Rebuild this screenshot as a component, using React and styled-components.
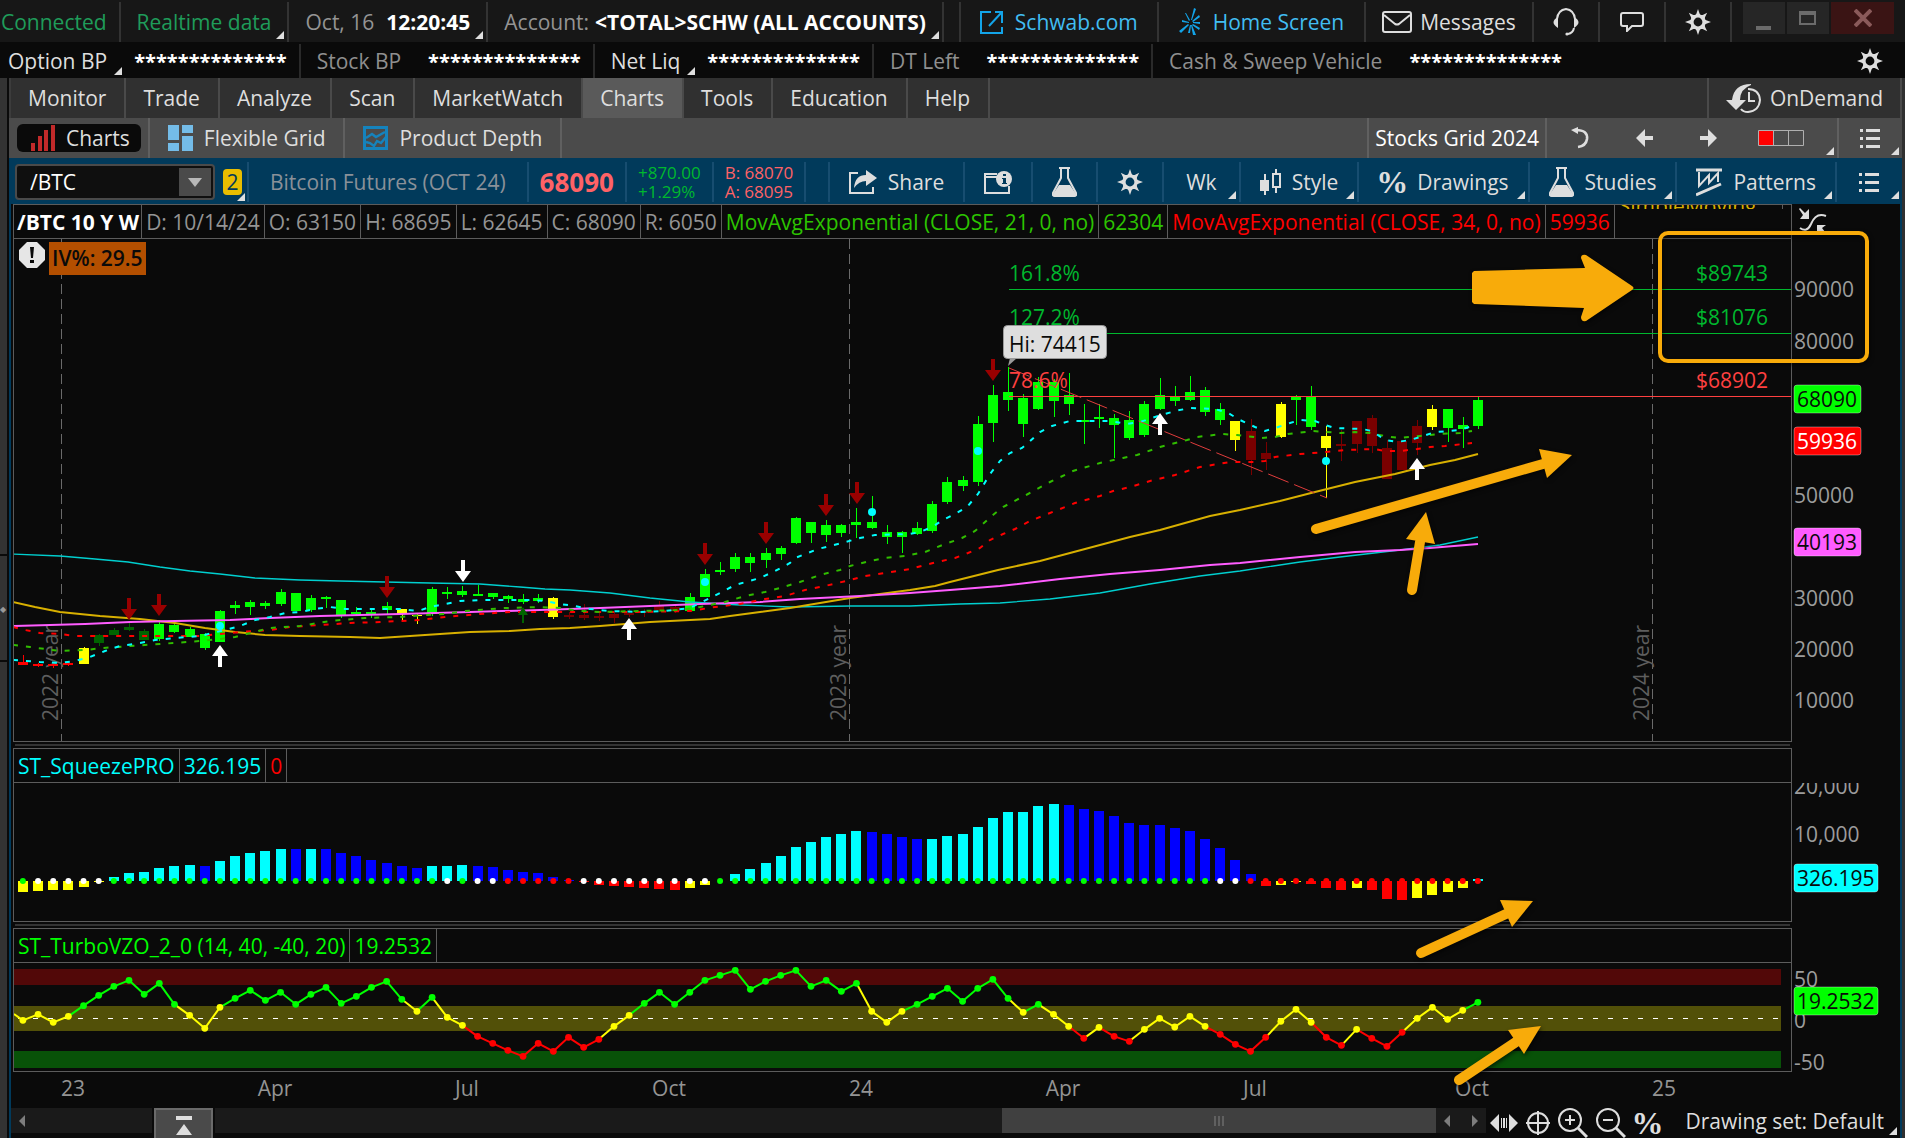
import React from 'react';
import styled, { createGlobalStyle, css } from 'styled-components';

/* ---------- data ---------- */

const STEP = 15.156;
const barX = (i) => 22.9 + STEP * i;

const GREEN = '#00ff00';
const DARK_GREEN = '#006400';
const RED = '#ff0000';
const MAROON = '#7a0000';
const YELLOW = '#ffff00';
const CYAN = '#00ffff';
const BLUE = '#0000ff';
const ORANGE = '#f8ab0a';

// high, low, body top, body bottom, colour
const candles = [
    [655, 665, 662, 665, RED], [663, 667, 664, 666, RED], [663, 668, 664, 666, RED], [662, 666, 663, 665, RED],
    [647, 664, 648, 664, YELLOW], [634, 646, 635, 643, DARK_GREEN], [628, 635, 630, 635, DARK_GREEN],
    [623, 631, 627, 630, DARK_GREEN], [629, 640, 631, 640, DARK_GREEN], [620, 641, 624, 639, GREEN],
    [621, 633, 625, 632, GREEN], [627, 637, 629, 637, GREEN], [633, 650, 634, 648, GREEN], [610, 642, 611, 642, GREEN],
    [601, 614, 605, 608, GREEN], [600, 615, 602, 607, GREEN], [601, 609, 603, 606, GREEN], [589, 606, 592, 604, GREEN],
    [593, 611, 593, 611, GREEN], [595, 612, 598, 610, GREEN], [596, 608, 597, 599, GREEN], [600, 618, 600, 615, GREEN],
    [607, 616, 612, 614, GREEN], [608, 618, 612, 614, GREEN], [602, 614, 606, 610, GREEN], [609, 620, 609, 614, YELLOW],
    [613, 624, 615, 616, YELLOW], [587, 616, 589, 614, GREEN], [587, 599, 592, 594, GREEN], [586, 597, 591, 595, GREEN],
    [585, 596, 594, 596, GREEN], [593, 599, 593, 597, GREEN], [595, 603, 596, 599, GREEN], [594, 604, 599, 602, GREEN],
    [594, 603, 598, 601, GREEN], [597, 619, 598, 617, YELLOW], [612, 619, 615, 617, MAROON], [604, 620, 615, 618, MAROON],
    [612, 621, 616, 618, MAROON], [612, 623, 614, 618, MAROON], [609, 617, 613, 615, MAROON], [609, 617, 611, 613, MAROON],
    [601, 612, 606, 610, MAROON], [605, 613, 607, 611, MAROON], [593, 612, 597, 611, GREEN], [569, 597, 574, 597, GREEN],
    [562, 575, 570, 572, GREEN], [553, 572, 557, 569, GREEN], [553, 572, 557, 563, GREEN], [548, 568, 553, 560, GREEN],
    [546, 560, 548, 554, GREEN], [517, 544, 518, 543, GREEN], [522, 543, 522, 533, GREEN], [520, 542, 525, 535, GREEN],
    [524, 537, 525, 533, GREEN], [508, 538, 522, 525, GREEN], [496, 529, 522, 528, GREEN], [525, 544, 532, 537, GREEN],
    [531, 553, 532, 537, GREEN], [522, 535, 528, 534, GREEN], [501, 533, 504, 531, GREEN], [477, 504, 482, 502, GREEN],
    [476, 491, 480, 486, GREEN], [416, 486, 424, 482, GREEN], [385, 442, 395, 423, GREEN], [367, 411, 392, 400, GREEN],
    [394, 437, 398, 424, GREEN], [377, 410, 382, 409, GREEN], [379, 417, 382, 401, GREEN], [373, 415, 395, 404, GREEN],
    [404, 444, 420, 422, GREEN], [404, 428, 417, 419, GREEN], [414, 458, 418, 425, GREEN], [411, 440, 420, 438, GREEN],
    [401, 437, 404, 435, GREEN], [378, 410, 395, 409, GREEN], [386, 406, 397, 401, GREEN], [376, 401, 392, 400, GREEN],
    [387, 416, 390, 412, GREEN], [403, 425, 409, 420, GREEN], [421, 451, 421, 440, YELLOW], [419, 475, 431, 460, MAROON],
    [442, 470, 453, 459, MAROON], [402, 438, 404, 437, YELLOW], [395, 425, 397, 400, GREEN], [386, 430, 397, 427, GREEN],
    [426, 498, 436, 448, YELLOW], [430, 461, 444, 446, MAROON], [421, 453, 421, 444, MAROON], [415, 453, 418, 446, MAROON],
    [440, 479, 448, 479, MAROON], [440, 470, 441, 470, MAROON], [420, 455, 426, 443, MAROON], [405, 430, 409, 427, YELLOW],
    [409, 442, 409, 428, GREEN], [417, 448, 425, 429, GREEN], [397, 429, 400, 426, GREEN],
];

const averages = [
    { color: '#00cfcf', width: 1.3, points: '13,554 60,556 95,559 128,562 160,567 190,571 220,574 255,578 300,580 340,581 385,582 430,583 480,584 520,587 545,589 570,590 610,593 650,598 690,602 740,605 790,607 850,606 910,606 960,604 1000,603 1050,599 1100,593 1150,584 1200,576 1240,571 1300,562 1340,557 1400,550 1440,545 1478,537' },
    { color: '#d8b000', width: 2, points: '13,602 35,607 60,612 100,616 140,619 175,623 205,628 235,632 265,635 300,636 350,637 380,638 410,636 440,634 470,632 510,631 540,629 570,628 600,626 650,622 710,619 730,616 760,612 790,608 820,603 850,598 880,594 910,590 935,586 950,582 998,570 1040,561 1085,549 1130,537 1160,530 1210,516 1240,510 1280,501 1315,492 1355,482 1395,474 1430,465 1455,460 1478,454' },
    { color: '#ff5cff', width: 2, points: '13,626 50,625 85,624 130,622 175,621 230,620 270,618 320,616 400,614 470,612 540,610 600,608 650,606 700,604 760,602 800,599 860,596 910,593 950,590 1000,586 1060,579 1110,574 1160,570 1210,565 1240,563 1300,557 1355,552 1400,550 1430,548 1478,544' },
    { color: '#ff0000', width: 2, dash: '5 8', points: '13,627 25,630 40,633 60,634 75,636 110,636 160,636 200,636 220,634 240,632 270,630 290,627 320,625 350,623 380,622 420,620 445,617 480,614 510,612 550,612 600,612 640,612 690,611 715,607 740,604 765,599 785,596 805,590 825,586 850,580 865,576 885,573 910,569 933,563 955,558 968,553 980,548 990,540 1003,534 1015,529 1030,521 1050,513 1075,503 1100,496 1113,491 1130,487 1150,481 1175,475 1200,467 1230,462 1255,462 1265,461 1275,457 1300,454 1326,452 1345,450 1375,449 1385,451 1400,451 1417,449 1430,447 1445,446 1472,443' },
    { color: '#30bd00', width: 2, dash: '5 8', points: '13,645 30,647 45,649 60,651 85,650 103,648 130,646 160,644 200,641 220,639 235,637 270,628 300,626 330,621 365,618 400,617 425,615 445,614 465,611 505,608 540,607 560,608 580,611 600,612 640,611 680,610 700,607 725,602 745,596 765,592 780,588 800,582 820,575 840,570 850,566 870,561 885,558 905,556 925,552 945,544 962,538 975,531 993,515 1003,507 1028,494 1050,482 1073,471 1100,463 1123,458 1137,455 1160,447 1187,440 1197,437 1222,434 1237,435 1262,438 1275,437 1288,434 1313,431 1340,433 1355,432 1370,433 1390,437 1400,438 1420,436 1440,434 1460,433 1472,431' },
    { color: '#00ffff', width: 2, dash: '5 8', points: '13,660 40,662 60,663 75,661 90,657 105,651 120,646 140,643 155,640 175,638 200,636 225,630 240,626 255,620 270,617 285,613 300,612 315,609 330,607 345,609 400,609 418,611 430,607 445,604 460,601 480,600 530,600 545,601 560,604 575,606 590,609 610,611 640,612 665,611 690,608 700,603 712,597 722,592 735,585 760,578 775,571 790,563 795,558 818,549 842,543 860,538 875,535 910,534 920,532 932,527 943,520 955,514 967,507 978,494 990,474 1000,461 1010,453 1022,448 1028,443 1040,432 1052,426 1070,421 1110,421 1127,424 1140,422 1155,417 1175,411 1190,408 1215,409 1228,413 1240,420 1255,427 1265,431 1275,428 1290,423 1300,420 1315,421 1325,425 1335,428 1362,429 1372,431 1385,440 1397,442 1410,440 1420,437 1435,432 1450,431 1460,430 1472,426' },
];

const downArrows = [[129, 598], [159, 594], [387, 576], [705, 543], [766, 522], [826, 494], [857, 482], [993, 359]];
const upArrows = [[220, 645], [629, 618], [1160, 413], [1417, 458]];
const signalDots = [[220, 626], [705, 582], [872, 512], [978, 451], [1326, 461]];
const years = [[61, '2022 year'], [849, '2023 year'], [1652, '2024 year']];

const momentum = [
    -11, -10, -9, -9, -6, -1, 4, 8, 9, 13, 15, 16, 15, 20, 25, 28, 30, 32, 32, 32, 32, 28, 25, 21, 18, 15, 13, 15, 15, 16,
    15, 14, 11, 9, 8, 4, 1, -1, -4, -5, -6, -7, -8, -9, -7, -4, 0, 7, 12, 18, 25, 34, 39, 44, 47, 50, 49, 47, 44, 42,
    42, 45, 47, 54, 63, 69, 69, 75, 77, 76, 72, 70, 65, 58, 56, 56, 53, 50, 42, 33, 21, 7, -5, -4, -1, -3, -7, -9, -7, -9,
    -18, -19, -17, -14, -11, -7, 2,
];
// y yellow, c cyan, b blue, r red
const momentumColors =
    'yyyyyy' + 'cccccc' + 'b' + 'ccccc' + 'b' + 'c' + 'bbbbbbb' + 'ccc' + 'bbbbbbb' + 'rrrrrrr' + 'yy' + 'c' + 'ccccccccc' + 'bbbb' + 'ccccccccc' + 'bbbbbbbbbbbbb' + 'r' + 'yy' + 'rrr' + 'y' + 'rrr' + 'yyyy' + 'c';
const squeezeDots =
    'g' + 'wwwww' + 'g'.repeat(22) + 'w' + 'g' + 'ww' + 'rrrrr' + 'w'.repeat(9) + 'g'.repeat(33) + 'ww' + 'r'.repeat(16);
const palette = { y: YELLOW, c: CYAN, b: BLUE, r: RED, g: GREEN, w: '#ffffff' };

const vzo = [
    841, 823, 847, 829, 797, 766, 739, 721, 763, 730, 793, 826, 865, 802, 775, 751, 781, 757, 793, 763, 742, 790, 769, 742,
    724, 778, 814, 772, 832, 856, 889, 910, 931, 949, 910, 934, 892, 922, 898, 859, 826, 790, 757, 793, 757, 721, 706, 691,
    748, 724, 706, 691, 739, 721, 754, 730, 814, 847, 814, 793, 769, 745, 784, 745, 718, 775, 817, 793, 823, 859, 895, 862,
    889, 904, 868, 835, 861, 829, 859, 883, 913, 934, 892, 844, 808, 847, 892, 916, 868, 895, 919, 877, 835, 802, 838, 811, 787,
];
const vzoY = (v) => 740 + v / 3;
const vzoColor = (v) => {
    if (v < 800) return GREEN;
    if (v >= 870) return RED;
    return YELLOW;
};

/* ---------- icons ---------- */

const gearPath = Array.from({ length: 32 }, (_, i) => {
    const angle = (i * Math.PI) / 16;
    const r = i % 4 === 0 ? 13 : i % 4 === 2 ? 7.5 : 8.4;
    return `${i ? 'L' : 'M'}${(13 + r * Math.sin(angle)).toFixed(2)} ${(13 - r * Math.cos(angle)).toFixed(2)}`;
}).join('') + 'Z M17.4 13 A4.4 4.4 0 1 0 8.6 13 A4.4 4.4 0 1 0 17.4 13 Z';

const GearIcon = () => (
    <svg width="26" height="26" viewBox="0 0 26 26"><path d={gearPath} fill="#dedede" fillRule="evenodd" /></svg>
);

const ExternalIcon = () => (
    <svg width="23" height="23" viewBox="0 0 23 23" fill="none" stroke="#13a4e8" strokeWidth="2">
        <path d="M11 1H1v21h21v-6M15 1h7v7M22 8v4M22 1 9 15" />
    </svg>
);

const BurstIcon = () => (
    <svg width="22" height="28" viewBox="0 0 22 28" fill="#13a4e8">
        <path d="M15 0l2 1-4 11h-1zM6 5l1 0 4 7-1 1zM20 7l1 2-7 5-1-1zM3 12l7 2v1l-7-1zM21 14l0 2-7-1v-1zM9 16l1 1-8 8-2-2zM12 17h1l4 10h-3zM14 16l7 4-1 2-7-5zM11 17h1l-1 8H9z" />
    </svg>
);

const MailIcon = () => (
    <svg width="30" height="22" viewBox="0 0 30 22" fill="none" stroke="#dedede" strokeWidth="2">
        <rect x="1" y="1" width="28" height="20" rx="2" /><path d="M2 4l11 9q2 1 4 0L28 4" />
    </svg>
);

const HeadsetIcon = () => (
    <svg width="26" height="28" viewBox="0 0 26 28" fill="none" stroke="#dedede" strokeWidth="2">
        <path d="M4 11Q5 2 13 1q8 1 9 10M21 20q-1 5-6 6" />
        <path d="M5 9q-9 5 0 11zM21 9q9 5 0 11z" fill="#dedede" stroke="none" />
        <circle cx="14" cy="26" r="1.6" fill="#dedede" stroke="none" />
    </svg>
);

const ChatIcon = () => (
    <svg width="24" height="20" viewBox="0 0 24 20" fill="none" stroke="#dedede" strokeWidth="2">
        <path d="M3 1h18q2 0 2 2v9q0 2-2 2H12l-5 5v-5H3q-2 0-2-2V3q0-2 2-2z" />
    </svg>
);

const BarsIcon = () => (
    <svg width="24" height="26" viewBox="0 0 24 26" fill="#c22a2a">
        <path d="M0 18h4v8H0zM7 11h4v15H7zM13 5h4v21h-4zM20 0h4v26h-4z" />
    </svg>
);

const GridIcon = () => (
    <svg width="25" height="26" viewBox="0 0 25 26" fill="#74bce8">
        <path d="M0 0h11v15H0zM14 0h11v8H14zM0 18h11v8H0zM14 11h11v15H14z" />
    </svg>
);

const DepthIcon = () => (
    <svg width="25" height="24" viewBox="0 0 25 24" fill="none" stroke="#1583bd" strokeWidth="2.4">
        <rect x="1.5" y="1.5" width="22" height="21" strokeWidth="3" />
        <path d="M3 12l6-4 4 3 9-5M3 16l4 1 4 3 3-5 4 2 5-6" />
    </svg>
);

const OnDemandIcon = () => (
    <svg width="36" height="29" viewBox="0 0 36 29">
        <path d="M25 0Q8 0 6 16H0l10 10 10-10h-6Q14 5 25 1z" fill="#dedede" />
        <path d="M22 5q11 0 12 11-1 11-12 12-5 0-7-3M23 8v9h6" fill="none" stroke="#dedede" strokeWidth="2" />
    </svg>
);

const UndoIcon = () => (
    <svg width="18" height="22" viewBox="0 0 18 22">
        <path d="M5 3q12 0 11 9-1 7-9 8" fill="none" stroke="#dedede" strokeWidth="2.6" />
        <path d="M0 3l7-3v7z" fill="#dedede" />
    </svg>
);

const ArrowIcon = ({ right }) => (
    <svg width="17" height="18" viewBox="0 0 17 18">
        <path d={right ? 'M17 9L8 0v7H0v4h8v7z' : 'M0 9l9-9v7h8v4H9v7z'} fill="#dedede" />
    </svg>
);

const ListIcon = () => (
    <svg width="20" height="19" viewBox="0 0 20 19" fill="#dedede">
        <path d="M0 0h3v3H0zM6 0h14v3H6zM0 8h3v3H0zM6 8h14v3H6zM0 16h3v3H0zM6 16h14v3H6z" />
    </svg>
);

const ShareIcon = () => (
    <svg width="28" height="24" viewBox="0 0 28 24">
        <path d="M9 3H1v20h23v-6" fill="none" stroke="#dedede" strokeWidth="2" />
        <path d="M17 0l11 8-11 8v-5q-7 0-12 7 1-13 12-13z" fill="#dedede" />
    </svg>
);

const NewsIcon = () => (
    <svg width="28" height="23" viewBox="0 0 28 23">
        <path d="M13 3H1v19h24v-7" fill="none" stroke="#dedede" strokeWidth="2" />
        <path d="M1 6h12" stroke="#dedede" strokeWidth="2" />
        <circle cx="20" cy="8" r="8" fill="#dedede" />
        <path d="M19 3h3v2h-3zM18 7h4v5h1v1h-5v-1h1V8h-1z" fill="#013a5b" />
    </svg>
);

const FlaskIcon = () => (
    <svg width="25" height="30" viewBox="0 0 25 30">
        <path d="M7 1h11M9 1v10L1 26q-1 3 2 3h19q3 0 2-3L16 11V1" fill="none" stroke="#dedede" strokeWidth="2" />
        <path d="M7 18h11l6 9q0 3-3 3H4q-3 0-3-3z" fill="#dedede" />
    </svg>
);

const CandleIcon = () => (
    <svg width="21" height="26" viewBox="0 0 21 26">
        <path d="M0 11h9v11H0zM4 5h2v6H4zM4 22h2v4H4zM15 0h2v5h-2zM15 19h2v5h-2z" fill="#dedede" />
        <path d="M13 5h7v13h-7z" fill="none" stroke="#dedede" strokeWidth="2" />
    </svg>
);

const PatternIcon = () => (
    <svg width="26" height="29" viewBox="0 0 26 29" fill="none" stroke="#dedede">
        <path d="M0 2h26M0 27l25-11" strokeWidth="3" /><path d="M3 4v14L13 7v8l9-10v9" strokeWidth="2" />
    </svg>
);

const AlertIcon = () => (
    <svg width="26" height="26" viewBox="0 0 26 26">
        <path d="M8 0h10l8 8v10l-8 8H8l-8-8V8z" fill="#e6e6e6" /><path d="M11 5h4l-1 11h-2zM11 18h4v3h-4z" fill="#0a0a0a" />
    </svg>
);

const ScaleIcon = () => (
    <svg width="28" height="24" viewBox="0 0 28 24">
        <path d="M1 20q7 5 11-4 5-12 15-8" fill="none" stroke="#dedede" strokeWidth="2" />
        <path d="M0 1l1-1 5 5 4-4v10H1l3-4zM18 17h9l-4 3 3 4h-8z" fill="#dedede" />
    </svg>
);

const PanIcon = () => (
    <svg width="28" height="18" viewBox="0 0 28 18" fill="#dedede">
        <path d="M0 9l9-9v18zM28 9l-9-9v18zM11 4h1v10h-1zM13 4h2v10h-2zM16 4h1v10h-1z" />
    </svg>
);

const CrosshairIcon = () => (
    <svg width="24" height="24" viewBox="0 0 24 24" fill="none" stroke="#dedede" strokeWidth="2">
        <circle cx="12" cy="12" r="10" /><path d="M12 0v24M0 12h24" />
    </svg>
);

const ZoomIcon = ({ plus }) => (
    <svg width="30" height="30" viewBox="0 0 30 30" fill="none" stroke="#dedede" strokeWidth="2">
        <circle cx="12" cy="12" r="11" /><path d={plus ? 'M7 12h10M12 7v10' : 'M7 12h10'} /><path d="M20 20l9 9" strokeWidth="3" />
    </svg>
);

/* ---------- small pieces ---------- */

const Cell = ({ caret, children, ...rest }) => (
    <BarCell {...rest}>
        {children}
        {caret && <Caret />}
    </BarCell>
);

const MaskedValue = () => <Masked>**************</Masked>;

const SignalArrow = ({ x, y, up, color }) => (
    <path
        d={up ? `M${x} ${y}l8 11h-6v11h-4v-11h-6z` : `M${x} ${y + 22}l8 -11h-6v-11h-4v11h-6z`}
        fill={color}
    />
);

const AxisTag = ({ y, width, fill, color = '#0a0a0a', children }) => (
    <g>
        <rect x="1794" y={y} width={width} height="28" rx="3" fill={fill} stroke="#ffffff" strokeOpacity="0.35" />
        <text x="1797" y={y + 22} fill={color}>{children}</text>
    </g>
);

/* ---------- plots ---------- */

const PricePlot = () => (
    <Plot viewBox="14 239 1777 502" preserveAspectRatio="xMinYMin meet">
        {years.map(([x, label]) => (
            <g key={label}>
                <path d={`M${x + 0.5} 239V741`} stroke="#6a6a6a" strokeDasharray="10 5" />
                <text transform={`translate(${x - 3} 721) rotate(-90)`} fill="#5e5e5e">{label}</text>
            </g>
        ))}
        {candles.map(([high, low, top, bottom, color], i) => (
            <g key={i} fill={color}>
                <rect x={Math.round(barX(i))} y={high} width="1" height={low - high} />
                <rect x={Math.round(barX(i)) - 5} y={top} width="10" height={Math.max(bottom - top, 1)} />
            </g>
        ))}
        {averages.map(({ color, width, dash, points }) => (
            <polyline key={points} points={points} fill="none" stroke={color} strokeWidth={width} strokeDasharray={dash} />
        ))}
        <path d="M1009 289.5H1791M1009 333.5H1791" stroke="#00b82e" />
        <path d="M1009 396.5H1791" stroke="#ff4040" />
        <path d="M1009 368L1327 498" stroke="#e03c3c" strokeDasharray="22 6" />
        <text x="1009" y="281" fill="#00b82e">161.8%</text>
        <text x="1009" y="325" fill="#00b82e">127.2%</text>
        <text x="1009" y="388" fill="#ff4040">78.6%</text>
        <text x="1696" y="281" fill="#00b82e">$89743</text>
        <text x="1696" y="325" fill="#00b82e">$81076</text>
        <text x="1696" y="388" fill="#ff4040">$68902</text>
        {downArrows.map(([x, y]) => <SignalArrow key={x} x={x} y={y} color="#990000" />)}
        <SignalArrow x={463} y={560} color="#ffffff" />
        {upArrows.map(([x, y]) => <SignalArrow key={x} x={x} y={y} up color="#ffffff" />)}
        <path d="M523 607l5 8h-4v8h-2v-8h-4z" fill="#006400" />
        {signalDots.map(([x, y]) => <circle key={x} cx={x} cy={y} r="4" fill={CYAN} />)}
        <path d="M1008 366l2-8h7z" fill="#9a9a9a" />
        <rect x="1003.5" y="325.5" width="103" height="33" rx="4" fill="#dedede" stroke="#9a9a9a" />
        <text x="1009" y="352" fill="#0a0a0a">Hi: 74415</text>
    </Plot>
);

const SqueezePlot = () => (
    <Plot viewBox="14 783 1777 138" preserveAspectRatio="xMinYMin meet">
        {momentum.map((value, i) => (
            <rect
                key={i}
                x={Math.round(barX(i)) - 5}
                y={value > 0 ? 881 - value : 881}
                width="10"
                height={Math.abs(value)}
                fill={palette[momentumColors[i]]}
            />
        ))}
        {momentum.map((_, i) => <circle key={i} cx={barX(i)} cy="881" r="3" fill={palette[squeezeDots[i]]} />)}
    </Plot>
);

const VzoPlot = () => (
    <Plot viewBox="14 963 1777 108" preserveAspectRatio="xMinYMin meet">
        <rect x="14" y="969" width="1767" height="16" fill="#520808" />
        <rect x="14" y="1006" width="1767" height="25" fill="#525008" />
        <rect x="14" y="1051" width="1767" height="17" fill="#085208" />
        <path d="M18 1018.5H1781" stroke="#ffffff" strokeDasharray="5 10" />
        <path d={`M14 1014L${barX(0)} ${vzoY(vzo[0])}`} stroke={YELLOW} strokeWidth="2" />
        {vzo.slice(1).map((v, i) => (
            <path
                key={i}
                d={`M${barX(i)} ${vzoY(vzo[i])}L${barX(i + 1)} ${vzoY(v)}`}
                stroke={vzoColor(v)}
                strokeWidth="2"
            />
        ))}
        {vzo.map((v, i) => <circle key={i} cx={barX(i)} cy={vzoY(v)} r="3.4" fill={vzoColor(v)} />)}
    </Plot>
);

const Annotations = () => (
    <Overlay viewBox="11 204 1889 904" preserveAspectRatio="xMinYMin meet">
        <g fill={ORANGE} stroke={ORANGE} strokeLinecap="round">
            <rect x="1660" y="233" width="207" height="128" rx="8" fill="none" strokeWidth="4" />
            <path d="M1472 273l2-2 111-3-4-10q0-4 5-3l46 31q3 2 0 4l-46 31q-5 1-5-4l3-9-110-4-2-2z" stroke="none" />
            <path d="M1316 529L1543 464" strokeWidth="10" />
            <path d="M1539 449L1572 455L1547 478Z" stroke="none" />
            <path d="M1412 590L1420 542" strokeWidth="10" />
            <path d="M1426 512L1406 539L1435 544Z" stroke="none" />
            <path d="M1421 953L1506 914" strokeWidth="10" />
            <path d="M1533 901L1500 900L1512 927Z" stroke="none" />
            <path d="M1459 1080L1516 1042" strokeWidth="10" />
            <path d="M1541 1026L1508 1030L1524 1054Z" stroke="none" />
        </g>
    </Overlay>
);

/* ---------- page ---------- */

export default function App() {
    return (
        <Page>
            <GlobalStyle />
            <TopBar>
                <Cell $flush $tone="#1f9c5a">Connected</Cell>
                <Cell caret $tone="#1f9c5a">Realtime data</Cell>
                <Cell caret $gap="12px"><Dim>Oct, 16</Dim><b>12:20:45</b></Cell>
                <Cell caret $gap="6px"><Dim>Account:</Dim><b>&lt;TOTAL&gt;SCHW (ALL ACCOUNTS)</b></Cell>
                <Spacer $w="17px" />
                <Cell $pad="19px"><TopLink href="#schwab"><ExternalIcon />Schwab.com</TopLink></Cell>
                <Cell $pad="20px"><TopLink href="#home"><BurstIcon />Home Screen</TopLink></Cell>
                <Cell as="button" $gap="8px"><MailIcon />Messages</Cell>
                <IconCell aria-label="Support"><HeadsetIcon /></IconCell>
                <IconCell aria-label="Chat"><ChatIcon /></IconCell>
                <IconCell aria-label="Settings"><GearIcon /></IconCell>
                <WindowButtons>
                    <WindowButton aria-label="Minimize"><svg width="16" height="24"><path d="M0 20h15v4H0z" fill="#6b6b6b" /></svg></WindowButton>
                    <WindowButton aria-label="Maximize"><svg width="18" height="14"><path d="M1 1h15v12H1zM1 3h15" fill="none" stroke="#6b6b6b" strokeWidth="2" /></svg></WindowButton>
                    <WindowButton $close aria-label="Close"><svg width="18" height="18"><path d="M1 1l16 16M17 1L1 17" stroke="#8a5a5a" strokeWidth="4" /></svg></WindowButton>
                </WindowButtons>
            </TopBar>

            <BalanceBar>
                <Balance><BalanceLabel $light>Option BP<Caret /></BalanceLabel><MaskedValue /></Balance>
                <Balance><BalanceLabel>Stock BP</BalanceLabel><MaskedValue /></Balance>
                <Balance><BalanceLabel $light>Net Liq<Caret /></BalanceLabel><MaskedValue /></Balance>
                <Balance><BalanceLabel>DT Left</BalanceLabel><MaskedValue /></Balance>
                <Balance $last><BalanceLabel>Cash &amp; Sweep Vehicle</BalanceLabel><MaskedValue /></Balance>
                <PlainButton aria-label="Balance settings"><GearIcon /></PlainButton>
            </BalanceBar>

            <Body>
                <Gutter><GutterHandle>◆</GutterHandle></Gutter>
                <Workspace>
                    <Tabs>
                        {['Monitor', 'Trade', 'Analyze', 'Scan', 'MarketWatch', 'Charts', 'Tools', 'Education', 'Help'].map((tab) => (
                            <Tab key={tab} $active={tab === 'Charts'}>{tab}</Tab>
                        ))}
                        <OnDemand><OnDemandIcon />OnDemand</OnDemand>
                    </Tabs>

                    <SubTabs>
                        <PillSlot><Pill><BarsIcon />Charts</Pill></PillSlot>
                        <SubTab><GridIcon />Flexible Grid</SubTab>
                        <SubTab><DepthIcon />Product Depth</SubTab>
                        <GridName>Stocks Grid 2024</GridName>
                        <GridTools>
                            <PlainButton aria-label="Undo"><UndoIcon /></PlainButton>
                            <PlainButton aria-label="Back"><ArrowIcon /></PlainButton>
                            <PlainButton aria-label="Forward"><ArrowIcon right /></PlainButton>
                            <PlainButton aria-label="Layout">
                                <svg width="46" height="16"><path d="M.5.5h45v15H.5zM15.500 0v16M30.500 0v16" fill="none" stroke="#b0b0b0" /><path d="M1 1h14v14H1z" fill="#ff0000" /></svg>
                            </PlainButton>
                            <Caret />
                        </GridTools>
                        <MenuCell aria-label="Grid menu"><ListIcon /><Caret /></MenuCell>
                    </SubTabs>

                    <SymbolBar>
                        <SymbolBox>
                            <SymbolInput aria-label="Symbol" defaultValue="/BTC" />
                            <SymbolDrop aria-label="Symbol list"><svg width="14" height="9"><path d="M0 0h14L7 9z" fill="#b8b8b8" /></svg></SymbolDrop>
                        </SymbolBox>
                        <LinkBadge>2<Caret /></LinkBadge>
                        <BlueCell $pad="21px" $tone="#8a9199">Bitcoin Futures (OCT 24)</BlueCell>
                        <BlueCell $pad="11px"><LastPrice>68090</LastPrice></BlueCell>
                        <BlueCell $pad="11px"><Quote $tone="#00b82e"><span>+870.00</span><span>+1.29%</span></Quote></BlueCell>
                        <BlueCell $pad="11px"><Quote $tone="#ff6266"><span>B: 68070</span><span>A: 68095</span></Quote></BlueCell>
                        <BarFill />
                        <BlueButton><ShareIcon />Share</BlueButton>
                        <BlueButton aria-label="News"><NewsIcon /></BlueButton>
                        <BlueButton aria-label="Edit studies"><FlaskIcon /></BlueButton>
                        <BlueButton aria-label="Chart settings"><GearIcon /></BlueButton>
                        <BlueButton $wide>Wk<Caret /></BlueButton>
                        <BlueButton><CandleIcon />Style<Caret /></BlueButton>
                        <BlueButton><PercentGlyph>%</PercentGlyph>Drawings<Caret /></BlueButton>
                        <BlueButton><FlaskIcon />Studies<Caret /></BlueButton>
                        <BlueButton><PatternIcon />Patterns<Caret /></BlueButton>
                        <BlueMenu aria-label="Chart menu"><ListIcon /><Caret /></BlueMenu>
                    </SymbolBar>

                    <ChartArea>
                        <Panel>
                            <PanelMain>
                                <Legend>
                                    <LegendTitle><b>/BTC 10 Y W</b></LegendTitle>
                                    {['D: 10/14/24', 'O: 63150', 'H: 68695', 'L: 62645', 'C: 68090', 'R: 6050'].map((text) => (
                                        <LegendCell key={text}>{text}</LegendCell>
                                    ))}
                                    <LegendCell $tone="#2cc400">MovAvgExponential (CLOSE, 21, 0, no)</LegendCell>
                                    <LegendCell $tone="#2cc400">62304</LegendCell>
                                    <LegendCell $tone="#ff0000">MovAvgExponential (CLOSE, 34, 0, no)</LegendCell>
                                    <LegendCell $tone="#ff0000">59936</LegendCell>
                                    <ScrolledCell>SimpleMoving</ScrolledCell>
                                </Legend>
                                <PlotBox>
                                    <PricePlot />
                                    <Badges><AlertIcon /><IvBadge>IV%: 29.5</IvBadge></Badges>
                                </PlotBox>
                            </PanelMain>
                            <Axis>
                                <AxisHead><ScaleIcon /></AxisHead>
                                <AxisPlot viewBox="1792 239 108 502" width="108" height="502">
                                    <g fill="#9c9c9c">
                                        <text x="1794" y="297">90000</text>
                                        <text x="1794" y="349">80000</text>
                                        <text x="1794" y="503">50000</text>
                                        <text x="1794" y="606">30000</text>
                                        <text x="1794" y="657">20000</text>
                                        <text x="1794" y="708">10000</text>
                                    </g>
                                    <AxisTag y={385} width="67" fill={GREEN}>68090</AxisTag>
                                    <AxisTag y={427} width="67" fill={RED} color="#ffffff">59936</AxisTag>
                                    <AxisTag y={528} width="67" fill="#ff5cff">40193</AxisTag>
                                </AxisPlot>
                            </Axis>
                        </Panel>
                        <Splitter />
                        <Panel>
                            <PanelMain>
                                <Legend>
                                    <LegendCell $tone="#00ffff">ST_SqueezePRO</LegendCell>
                                    <LegendCell $tone="#00ffff">326.195</LegendCell>
                                    <LegendCell $tone="#ff0000">0</LegendCell>
                                </Legend>
                                <SqueezePlot />
                            </PanelMain>
                            <Axis>
                                <AxisHead />
                                <AxisPlot viewBox="1792 783 108 138" width="108" height="138">
                                    <g fill="#9c9c9c">
                                        <text x="1794" y="794">20,000</text>
                                        <text x="1794" y="842">10,000</text>
                                    </g>
                                    <AxisTag y={864} width="84" fill={CYAN}>326.195</AxisTag>
                                </AxisPlot>
                            </Axis>
                        </Panel>
                        <Splitter />
                        <Panel>
                            <PanelMain>
                                <Legend>
                                    <LegendCell $tone="#00ff00">ST_TurboVZO_2_0 (14, 40, -40, 20)</LegendCell>
                                    <LegendCell $tone="#00ff00">19.2532</LegendCell>
                                </Legend>
                                <VzoPlot />
                            </PanelMain>
                            <Axis>
                                <AxisHead />
                                <AxisPlot viewBox="1792 963 108 108" width="108" height="108">
                                    <g fill="#9c9c9c">
                                        <text x="1794" y="987">50</text>
                                        <text x="1794" y="1028">0</text>
                                        <text x="1794" y="1070">-50</text>
                                    </g>
                                    <AxisTag y={987} width="84" fill={GREEN}>19.2532</AxisTag>
                                </AxisPlot>
                            </Axis>
                        </Panel>
                        <DateAxis viewBox="11 1072 1889 36" preserveAspectRatio="xMinYMin meet">
                            {[[73, '23'], [275, 'Apr'], [467, 'Jul'], [669, 'Oct'], [861, '24'], [1063, 'Apr'], [1255, 'Jul'], [1472, 'Oct'], [1664, '25']].map(([x, label]) => (
                                <text key={x} x={x} y="1096" textAnchor="middle">{label}</text>
                            ))}
                        </DateAxis>
                        <Annotations />
                    </ChartArea>

                    <BottomBar>
                        <ScrollButton $w="141px" aria-label="Scroll left"><svg width="6" height="12"><path d="M6 0v12L0 6z" fill="#7d7d7d" /></svg></ScrollButton>
                        <CollapseButton aria-label="Collapse"><svg width="16" height="19"><path d="M0 0h16v4H0zM8 8l8 11H0z" fill="#dedede" /></svg></CollapseButton>
                        <Track>
                            <Thumb><svg width="10" height="10"><path d="M1 0v10M5 0v10M9 0v10" stroke="#808080" /></svg></Thumb>
                        </Track>
                        <ScrollPair>
                            <PlainButton aria-label="Previous"><svg width="6" height="12"><path d="M6 0v12L0 6z" fill="#7d7d7d" /></svg></PlainButton>
                            <PlainButton aria-label="Next"><svg width="6" height="12"><path d="M0 0v12l6-6z" fill="#7d7d7d" /></svg></PlainButton>
                        </ScrollPair>
                        <BottomTools>
                            <PlainButton aria-label="Pan"><PanIcon /></PlainButton>
                            <PlainButton aria-label="Crosshair"><CrosshairIcon /></PlainButton>
                            <PlainButton aria-label="Zoom in"><ZoomIcon plus /></PlainButton>
                            <PlainButton aria-label="Zoom out"><ZoomIcon /></PlainButton>
                            <PlainButton aria-label="Drawing tools"><PercentGlyph>%</PercentGlyph></PlainButton>
                        </BottomTools>
                        <DrawingSet>Drawing set: Default<Caret /></DrawingSet>
                    </BottomBar>
                </Workspace>
            </Body>
        </Page>
    );
}

/* ---------- styles ---------- */

const GlobalStyle = createGlobalStyle`
    * {
        box-sizing: border-box;
    }

    body {
        margin: 0;
        background: #0a0a0a;
        color: #dedede;
        font-family: 'Open Sans', 'Noto Sans', sans-serif;
        font-size: 21px;
        white-space: nowrap;
        overflow: hidden;
    }

    button, input {
        font: inherit;
        color: inherit;
        background: none;
        border: 0;
        padding: 0;
        margin: 0;
    }

    svg {
        display: block;
        flex: none;
    }

    b {
        color: #ffffff;
    }
`;

const Page = styled.div`
    display: flex;
    flex-direction: column;
    min-height: 100vh;
    overflow: hidden;
`;

const TopBar = styled.header`
    display: flex;
    height: 42px;
    padding: 2px 11px 0 0;
    background: #171717;
`;

const BarCell = styled.div`
    position: relative;
    display: flex;
    align-items: center;
    flex: none;
    gap: ${props => props.$gap || '8px'};
    padding: 0 ${props => props.$pad || '16px'};
    border-right: 2px solid #333333;
    color: ${props => props.$tone || 'inherit'};
    ${props => props.$flush && css`
        padding: 0 12px 0 1px;
    `}
`;

const Dim = styled.span`
    color: #949494;
`;

const Spacer = styled.div`
    width: ${props => props.$w};
    border-right: 2px solid #333333;
`;

const TopLink = styled.a`
    display: flex;
    align-items: center;
    gap: 12px;
    color: #41bdf2;
    text-decoration: none;
`;

const IconCell = styled.button`
    display: flex;
    flex: none;
    align-items: center;
    justify-content: center;
    width: 66px;
    border-right: 2px solid #333333;
`;

const WindowButtons = styled.div`
    display: flex;
    gap: 2px;
    height: 32px;
    margin-left: auto;
`;

const WindowButton = styled.button`
    display: flex;
    align-items: center;
    justify-content: center;
    width: ${props => (props.$close ? '63px' : '42px')};
    background: ${props => (props.$close ? '#3a1414' : '#262626')};
`;

const Caret = styled.i`
    position: absolute;
    right: 3px;
    bottom: 3px;
    border-style: solid;
    border-width: 0 0 8px 8px;
    border-color: transparent transparent #dedede transparent;
`;

const BalanceBar = styled.div`
    display: flex;
    height: 36px;
    padding: 2px 22px 0 0;
    background: #0a0a0a;

    > button {
        margin-left: auto;
    }
`;

const Balance = styled.div`
    display: flex;
    align-items: center;
    gap: 12px;
    padding: 0 12px 0 16px;
    border-right: ${props => (props.$last ? '0' : '2px solid #2a2a2a')};

    &:first-child {
        padding-left: 8px;
    }
`;

const BalanceLabel = styled.span`
    position: relative;
    padding-right: 15px;
    color: ${props => (props.$light ? '#dedede' : '#8f8f8f')};

    i {
        right: 0;
        bottom: 0;
    }
`;

const Masked = styled.b`
    font-size: 20px;
`;

const PlainButton = styled.button`
    display: flex;
    align-items: center;
    justify-content: center;
`;

const Body = styled.div`
    display: flex;
    flex: 1;
    padding-right: 3px;
    background: #303030;
`;

const Gutter = styled.div`
    display: flex;
    align-items: center;
    width: 9px;
    border-right: 2px solid #0a0a0a;
    background: #333333;
    overflow: hidden;
`;

const GutterHandle = styled.span`
    display: flex;
    align-items: center;
    width: 7px;
    height: 108px;
    border: solid #0a0a0a;
    border-width: 2px 0;
    color: #999999;
    font-size: 8px;
`;

const Workspace = styled.main`
    display: flex;
    flex-direction: column;
    flex: 1;
    min-width: 0;
    background: #0a0a0a;
`;

const Tabs = styled.nav`
    display: flex;
    height: 40px;
    background: #303030;
    border-left: 2px solid #3c3c3c;
`;

const Tab = styled.button`
    padding: 0 18px 0 17px;
    border-right: 2px solid #4a4a4a;
    background: ${props => (props.$active ? '#5a5a5a' : 'transparent')};
`;

const OnDemand = styled.button`
    display: flex;
    align-items: center;
    gap: 8px;
    margin-left: auto;
    padding: 0 17px;
    border: solid #4a4a4a;
    border-width: 0 2px;
`;

const SubTabs = styled.div`
    display: flex;
    height: 40px;
    background: #4b4b4b;
`;

const PillSlot = styled.div`
    display: flex;
    align-items: center;
    padding: 0 7px 0 8px;
    border-right: 2px solid #606060;
`;

const Pill = styled.button`
    display: flex;
    align-items: center;
    gap: 11px;
    height: 28px;
    padding: 0 11px 0 14px;
    border-radius: 6px;
    background: #0a0a0a;
`;

const SubTab = styled.button`
    display: flex;
    align-items: center;
    gap: 11px;
    padding: 0 18px;
    border-right: 2px solid #606060;
`;

const GridName = styled.button`
    margin-left: auto;
    padding: 0 6px;
    border: solid #606060;
    border-width: 0 2px;
    color: #ffffff;
`;

const GridTools = styled.div`
    position: relative;
    display: flex;
    align-items: center;
    gap: 47px;
    padding: 0 33px 0 24px;
    border-right: 2px solid #606060;

    button:nth-of-type(4) {
        margin-left: -6px;
    }
`;

const MenuCell = styled.button`
    position: relative;
    display: flex;
    align-items: center;
    width: 63px;
    padding-left: 21px;
`;

const SymbolBar = styled.div`
    display: flex;
    height: 46px;
    padding: 4px 0 2px 6px;
    background: #013a5b;
`;

const SymbolBox = styled.div`
    display: flex;
    align-items: center;
    align-self: center;
    width: 200px;
    height: 36px;
    padding: 2px;
    border: 2px solid #4a4a4a;
    border-radius: 4px;
    background: #0f0f0f;
`;

const SymbolInput = styled.input`
    flex: 1;
    min-width: 0;
    height: 28px;
    padding-left: 11px;
    color: #ffffff;
`;

const SymbolDrop = styled.button`
    display: flex;
    align-items: center;
    justify-content: center;
    width: 32px;
    height: 28px;
    background: #4a4a4a;
`;

const LinkBadge = styled.button`
    position: relative;
    align-self: center;
    width: 19px;
    height: 26px;
    margin: 0 5px 0 8px;
    border-radius: 4px;
    background: #e8bd00;
    color: #013a5b;
    line-height: 24px;

    i {
        right: -3px;
        bottom: -6px;
    }
`;

const blueEdge = css`
    border-left: 2px solid #174d70;
`;

const BlueCell = styled.div`
    display: flex;
    align-items: center;
    padding: 0 ${props => props.$pad};
    color: ${props => props.$tone || 'inherit'};
    ${blueEdge}
`;

const LastPrice = styled.span`
    font-size: 26px;
    font-weight: 700;
    color: #ff6266;
`;

const Quote = styled.span`
    display: flex;
    flex-direction: column;
    font-size: 17px;
    line-height: 19px;
    color: ${props => props.$tone};
`;

const BarFill = styled.div`
    flex: 1;
    ${blueEdge}
`;

const BlueButton = styled.button`
    position: relative;
    display: flex;
    align-items: center;
    gap: 11px;
    padding: 0 ${props => (props.$wide ? '22px' : '19px')};
    ${blueEdge}
`;

const BlueMenu = styled(BlueButton)`
    width: 67px;
    padding: 0 0 0 22px;
`;

const PercentGlyph = styled.span`
    margin: 0 -2px;
    font-family: 'Liberation Serif', serif;
    font-size: 32px;
    font-weight: 700;
    line-height: 30px;
`;

const ChartArea = styled.section`
    position: relative;
    border: solid #013a5b;
    border-width: 0 2px;
`;

const Panel = styled.div`
    display: grid;
    grid-template-columns: 1fr 108px;
    padding-left: 2px;
`;

const PanelMain = styled.div`
    min-width: 0;
    border: 1px solid #5c5c5c;
`;

const Legend = styled.div`
    display: flex;
    height: 34px;
    border-bottom: 1px solid #5c5c5c;
    overflow: hidden;
`;

const LegendCell = styled.div`
    display: flex;
    align-items: center;
    padding: 0 4px;
    border-right: 1px solid #5c5c5c;
    color: ${props => props.$tone || '#949494'};
`;

const LegendTitle = styled(LegendCell)`
    padding: 0 2px 0 3px;
`;

const ScrolledCell = styled.div`
    display: flex;
    align-items: flex-end;
    width: 168px;
    height: 4px;
    padding: 0 4px;
    border-right: 1px solid #5c5c5c;
    color: #d8b000;
    line-height: 6px;
    overflow: hidden;
`;

const PlotBox = styled.div`
    position: relative;
`;

const Plot = styled.svg`
    width: 100%;
    height: auto;
    font-size: 21px;
`;

const Badges = styled.div`
    position: absolute;
    top: 3px;
    left: 5px;
    display: flex;
    gap: 4px;
`;

const IvBadge = styled.span`
    padding: 0 3px;
    background: #b34f00;
    color: #0a0a0a;
    font-weight: 600;
    line-height: 33px;
`;

const Axis = styled.div`
    padding-top: 1px;
    overflow: hidden;
`;

const AxisHead = styled.div`
    height: 34px;
    padding: 3px 0 0 7px;
`;

const AxisPlot = styled.svg`
    font-size: 21px;
`;

const Splitter = styled.div`
    height: 2px;
    margin: 2px 110px 2px 4px;
    background: #333333;
`;

const DateAxis = styled.svg`
    width: 100%;
    height: auto;
    fill: #949494;
    font-size: 21px;
`;

const Overlay = styled.svg`
    position: absolute;
    top: 0;
    left: 0;
    width: 100%;
    height: auto;
    pointer-events: none;
    filter: drop-shadow(1px 2px 2px rgba(0, 0, 0, 0.6));
`;

const BottomBar = styled.footer`
    display: flex;
    flex: 1;
    min-height: 30px;
    border: solid #013a5b;
    border-width: 0 2px;
`;

const ScrollButton = styled.button`
    display: flex;
    align-items: center;
    width: ${props => props.$w};
    height: 25px;
    padding-left: 8px;
    background: #1a1a1a;
`;

const CollapseButton = styled.button`
    display: flex;
    align-items: flex-end;
    justify-content: center;
    width: 59px;
    height: 30px;
    margin: 0 2px;
    padding-bottom: 3px;
    border: 2px solid #6a6a6a;
    border-bottom: 0;
    background: #4a4a4a;
`;

const Track = styled.div`
    display: flex;
    justify-content: flex-end;
    flex: 1;
    height: 25px;
    background: #1a1a1a;
`;

const Thumb = styled.div`
    display: flex;
    align-items: center;
    justify-content: center;
    width: 434px;
    background: #404040;
`;

const ScrollPair = styled.div`
    display: flex;
    align-items: center;
    justify-content: space-between;
    width: 50px;
    height: 25px;
    padding: 0 8px;
    background: #1a1a1a;
`;

const BottomTools = styled.div`
    display: flex;
    align-items: center;
    gap: 8px;
    padding: 0 24px 0 4px;
`;

const DrawingSet = styled.button`
    position: relative;
    padding: 0 16px 4px 0;
    line-height: 26px;
`;
